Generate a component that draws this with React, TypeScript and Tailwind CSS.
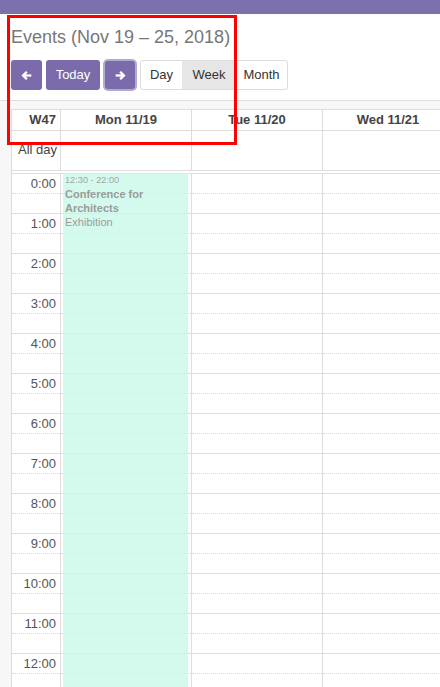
import React from 'react';

const hours = Array.from({ length: 13 }, (_, i) => `${i}:00`);
const days = ['Mon 11/19', 'Tue 11/20', 'Wed 11/21'];

const Arrow = ({ dir }: { dir: 'left' | 'right' }) => (
  <svg
    width="11"
    height="11"
    viewBox="0 0 16 16"
    className={dir === 'right' ? 'rotate-180' : ''}
    fill="none"
    stroke="white"
    strokeWidth="3.4"
    strokeLinejoin="miter"
  >
    <path d="M3 8 H15" />
    <path d="M8.5 2.5 L3 8 L8.5 13.5" />
  </svg>
);

export default function App() {
  return (
    <div className="relative w-[440px] h-[687px] overflow-hidden bg-white font-['Liberation_Sans',Arial,sans-serif]">
      <div className="h-[14px] bg-[#7e70ad]" />

      {/* control panel */}
      <div className="px-[11px] pt-[13px] pb-[10px] border-b border-[#dedede]">
        <h1 className="text-[18px] leading-[20px] text-[#777] whitespace-nowrap">
          Events (Nov 19 – 25, 2018)
        </h1>
        <div className="mt-[13px] flex items-center">
          <button className="w-[31px] h-[30px] rounded-[3px] bg-[#7c6baa] flex items-center justify-center">
            <Arrow dir="left" />
          </button>
          <button className="ml-[4px] w-[54px] h-[30px] rounded-[3px] bg-[#7c6baa] text-white text-[13px]">
            Today
          </button>
          <button className="ml-[5px] w-[30px] h-[28px] rounded-[3px] bg-[#7c6baa] ring-2 ring-[#b3aad2] flex items-center justify-center">
            <Arrow dir="right" />
          </button>
          <div className="ml-[5px] flex h-[30px] border border-[#dcdcdc] rounded-[3px] text-[13px] text-[#333]">
            <button className="w-[41px]">Day</button>
            <button className="w-[54px] bg-[#e6e6e6]">Week</button>
            <button className="w-[51px]">Month</button>
          </div>
        </div>
      </div>

      {/* calendar */}
      <div className="bg-[#f7f7f7] pl-[11px] pt-[8px] h-full">
        <div className="relative w-[600px] bg-white border-t border-l border-[#ddd]">
          <div className="flex h-[21px] border-b border-[#ddd] text-[13px] leading-[20px] font-bold text-[#444]">
            <div className="w-[48px] text-right pr-[4px]">W47</div>
            {days.map(d => (
              <div key={d} className="w-[131px] border-l border-[#ddd] text-center">
                {d}
              </div>
            ))}
          </div>

          <div className="flex h-[40px] border-b border-[#ddd] text-[13px] leading-[20px] text-[#444]">
            <div className="w-[48px] text-right pr-[3px] pt-[9px] whitespace-nowrap">All day</div>
            {days.map(d => (
              <div key={d} className="w-[131px] border-l border-[#ddd]" />
            ))}
          </div>
          <div className="h-[3px] border-b border-[#ddd]" />

          {hours.map(h => (
            <div key={h} className="flex h-[40px] border-b border-[#ddd]">
              <div className="w-[48px]">
                <div className="h-[20px] border-b border-dotted border-[#d6d6d6] text-right pr-[4px] text-[13px] leading-[19px] text-[#555]">
                  {h}
                </div>
              </div>
              {days.map(d => (
                <div key={d} className="w-[131px] border-l border-[#ddd]">
                  <div className="h-[20px] border-b border-dotted border-[#d6d6d6]" />
                </div>
              ))}
            </div>
          ))}

          {/* event */}
          <div className="absolute left-[51px] top-[63px] w-[125px] h-[600px] bg-[#c8f9e8]/80 px-[2px] pt-[1px] text-[#9b9b9b]">
            <div className="text-[9.2px] leading-[13px] text-[#a6a6a6]">12:30 - 22:00</div>
            <div className="text-[11px] leading-[14px] font-bold">Conference for Architects</div>
            <div className="text-[11px] leading-[15px]">Exhibition</div>
          </div>
        </div>
      </div>

      {/* annotation */}
      <div className="absolute left-[7px] top-[15px] w-[230px] h-[130px] border-[3px] border-[#ff0000]" />
    </div>
  );
}
